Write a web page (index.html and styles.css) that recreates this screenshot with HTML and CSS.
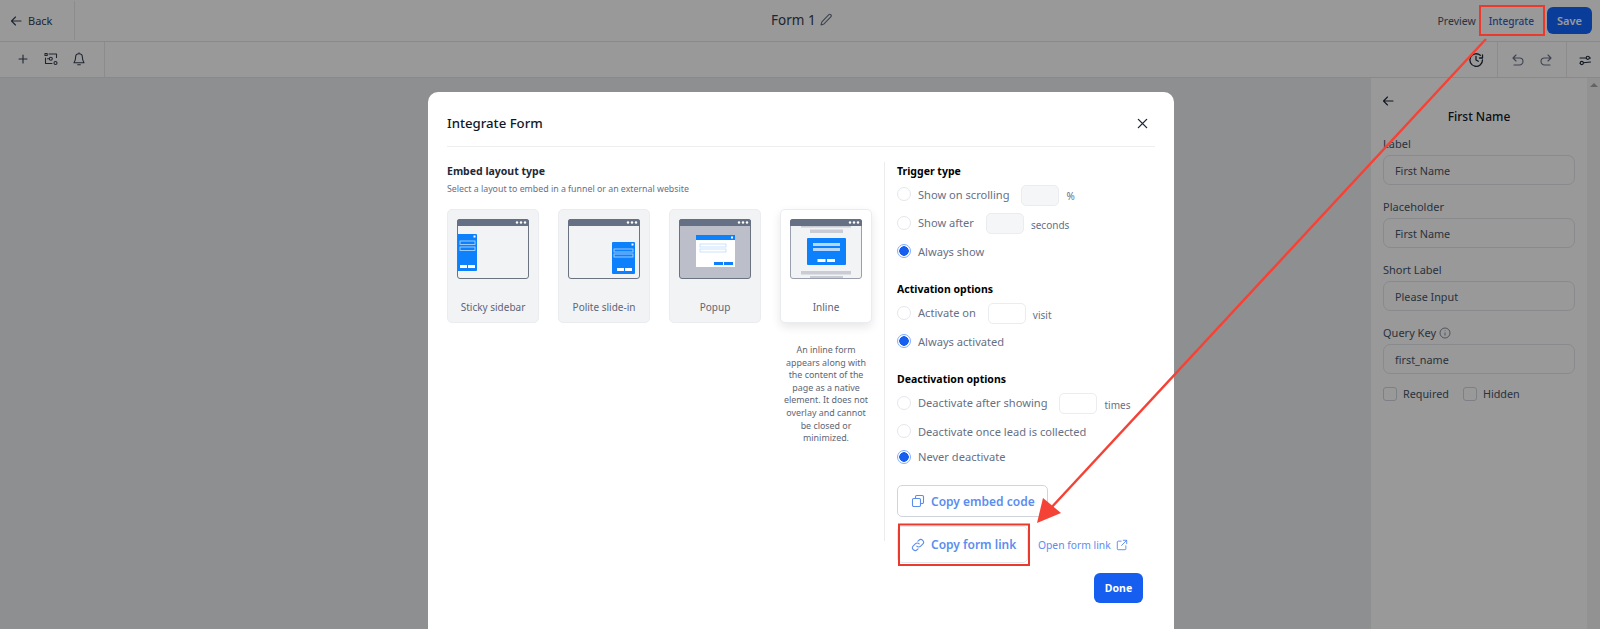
FILE: index.html
```html
<!DOCTYPE html>
<html lang="en">
<head>
<meta charset="utf-8">
<title>Integrate Form</title>
<link rel="stylesheet" href="styles.css">
</head>
<body>
<div class="app">
  <header class="topbar">
    <div class="back">
      <svg class="ic14" viewBox="0 0 14 14"><path d="M12 7H2.500M6.500 3l-4 4 4 4" /></svg>
      <span>Back</span>
    </div>
    <div class="title">
      <span>Form 1</span>
      <svg class="ic14" viewBox="0 0 14 14"><path d="M9.600 1.800a1.500 1.500 0 0 1 2.200 2.100L5 10.900l-3 1 .9-3.100z" /></svg>
    </div>
    <div class="actions">
      <span class="preview">Preview</span>
      <span class="integrate">Integrate</span>
      <span class="save">Save</span>
    </div>
  </header>
  <div class="toolbar">
    <div class="tools">
      <svg class="ic14" viewBox="0 0 14 14"><path d="M7 3v8M3 7h8" /></svg>
      <svg class="ic14" viewBox="0 0 14 14"><rect x="1" y="1.500" width="2.200" height="2" /><path d="M5 2h7.500v3.500M1.500 6v5.500H8" /><circle cx="6.800" cy="6.800" r="1.500" /><circle cx="11.500" cy="11" r="1.500" /><path d="M3.500 6.800h1.500" /></svg>
      <svg class="ic14" viewBox="0 0 14 14"><path d="M7 .8v1M7 1.800a3.400 3.400 0 0 0-3.400 3.400c0 3.300-1.600 5.600-1.600 5.600h10s-1.600-2.300-1.600-5.600A3.400 3.400 0 0 0 7 1.800ZM5.700 12.800h2.600" /></svg>
    </div>
    <div class="tools-right">
      <svg class="ic16 history" viewBox="0 0 16 16"><path d="M14.500 8A6.300 6.300 0 1 1 12.300 3.300M8 4.500V8l2.300 1.300M14.500 3v3h-3" /></svg>
      <div class="undo-group">
        <svg class="ic14 faint" viewBox="0 0 14 14"><path d="M5 2 2 5l3 3M2 5h6.500a3.500 3.500 0 0 1 0 7H3" /></svg>
        <svg class="ic14 faint" viewBox="0 0 14 14"><path d="M9 2l3 3-3 3M12 5H5.500a3.500 3.500 0 0 0 0 7H11" /></svg>
      </div>
      <div class="settings">
        <svg class="ic14" viewBox="0 0 14 14"><path d="M2 5h6M11.500 5H12.500M2 10.200h.5M5.500 9.800l7-.8" /><circle cx="9.800" cy="4.800" r="1.600" /><circle cx="3.800" cy="10" r="1.600" /></svg>
      </div>
    </div>
  </div>
  <div class="workspace">
    <div class="canvas"></div>
    <aside class="panel">
      <svg class="ic14 panel-back" viewBox="0 0 14 14"><path d="M12 7H2.500M6.500 3l-4 4 4 4" /></svg>
      <h2>First Name</h2>
      <label class="field-label">Label</label>
      <div class="field">First Name</div>
      <label class="field-label">Placeholder</label>
      <div class="field">First Name</div>
      <label class="field-label">Short Label</label>
      <div class="field">Please Input</div>
      <label class="field-label">Query Key
        <svg class="info" viewBox="0 0 12 12"><circle cx="6" cy="6" r="5" /><path d="M6 5.500v3M6 3.500v.6" /></svg>
      </label>
      <div class="field">first_name</div>
      <div class="checks">
        <span class="check"></span><span class="check-text">Required</span>
        <span class="check second"></span><span class="check-text">Hidden</span>
      </div>
    </aside>
    <div class="scrollcol"><span class="scroll-up"></span></div>
  </div>
</div>

<div class="overlay">
  <section class="modal">
    <div class="modal-head">
      <h1>Integrate Form</h1>
      <svg class="close" viewBox="0 0 12 12"><path d="M1.500 1.500l9 9M10.500 1.500l-9 9" /></svg>
    </div>
    <div class="modal-body">
      <div class="left">
        <h3>Embed layout type</h3>
        <p class="sub">Select a layout to embed in a funnel or an external website</p>
        <div class="cards">
          <div class="card-col">
            <div class="card">
              <svg class="illus" viewBox="0 0 72 60">
                <rect x=".5" y=".5" width="71" height="59" rx="2.500" fill="#f2f3f5" stroke="#6b7280"/>
                <path d="M0 7V2.500A2.500 2.500 0 0 1 2.500 0h67A2.500 2.500 0 0 1 72 2.500V7z" fill="#667085"/>
                <g fill="#fff"><circle cx="60" cy="3.500" r="1.200"/><circle cx="64" cy="3.500" r="1.200"/><circle cx="68" cy="3.500" r="1.200"/></g>
                <path d="M1 15h18a1 1 0 0 1 1 1v35a1 1 0 0 1-1 1H1z" fill="#0d80fb"/>
                <rect x="3" y="22" width="15" height="3.500" fill="none" stroke="#bcdcff" stroke-width=".8"/>
                <rect x="3" y="28" width="15" height="3.500" fill="none" stroke="#bcdcff" stroke-width=".8"/>
                <rect x="3" y="46" width="7" height="3" fill="#fff"/><rect x="11" y="46" width="7" height="3" fill="#fff"/>
                <rect x="16.500" y="16.500" width="2" height="2" fill="#fff"/>
              </svg>
              <span>Sticky sidebar</span>
            </div>
          </div>
          <div class="card-col">
            <div class="card">
              <svg class="illus" viewBox="0 0 72 60">
                <rect x=".5" y=".5" width="71" height="59" rx="2.500" fill="#f2f3f5" stroke="#6b7280"/>
                <path d="M0 7V2.500A2.500 2.500 0 0 1 2.500 0h67A2.500 2.500 0 0 1 72 2.500V7z" fill="#667085"/>
                <g fill="#fff"><circle cx="60" cy="3.500" r="1.200"/><circle cx="64" cy="3.500" r="1.200"/><circle cx="68" cy="3.500" r="1.200"/></g>
                <rect x="44" y="23" width="23" height="32" rx="1" fill="#0d80fb"/>
                <rect x="46" y="30" width="19" height="3" fill="none" stroke="#bcdcff" stroke-width=".8"/>
                <rect x="46" y="35" width="19" height="3" fill="none" stroke="#bcdcff" stroke-width=".8"/>
                <rect x="49" y="49" width="7" height="3" fill="#fff"/><rect x="57" y="49" width="7" height="3" fill="#fff"/>
                <rect x="63.500" y="24.500" width="2" height="2" fill="#fff"/>
              </svg>
              <span>Polite slide-in</span>
            </div>
          </div>
          <div class="card-col">
            <div class="card">
              <svg class="illus" viewBox="0 0 72 60">
                <rect x=".5" y=".5" width="71" height="59" rx="2.500" fill="#bcbfc9" stroke="#6b7280"/>
                <path d="M0 7V2.500A2.500 2.500 0 0 1 2.500 0h67A2.500 2.500 0 0 1 72 2.500V7z" fill="#667085"/>
                <g fill="#fff"><circle cx="60" cy="3.500" r="1.200"/><circle cx="64" cy="3.500" r="1.200"/><circle cx="68" cy="3.500" r="1.200"/></g>
                <rect x="17" y="16" width="39" height="32" fill="#fff"/>
                <rect x="17" y="16" width="39" height="5" fill="#0d80fb"/>
                <rect x="52" y="17.500" width="2" height="2" fill="#fff"/>
                <rect x="21" y="25" width="26" height="3" fill="#fff" stroke="#a9d0ff" stroke-width=".6"/>
                <rect x="21" y="30" width="26" height="3" fill="#fff" stroke="#a9d0ff" stroke-width=".6"/>
                <rect x="35" y="43" width="9" height="3" fill="#0d80fb"/><rect x="45" y="43" width="9" height="3" fill="#0d80fb"/>
              </svg>
              <span>Popup</span>
            </div>
          </div>
          <div class="card-col">
            <div class="card active">
              <svg class="illus" viewBox="0 0 72 60">
                <rect x=".5" y=".5" width="71" height="59" rx="2.500" fill="#f2f3f5" stroke="#9a9fae"/>
                <path d="M0 7V2.500A2.500 2.500 0 0 1 2.500 0h67A2.500 2.500 0 0 1 72 2.500V7z" fill="#667085"/>
                <g fill="#fff"><circle cx="60" cy="3.500" r="1.200"/><circle cx="64" cy="3.500" r="1.200"/><circle cx="68" cy="3.500" r="1.200"/></g>
                <rect x="11" y="7" width="50" height="1.500" fill="#c9ccd4"/>
                <rect x="20" y="10.500" width="33" height="3.500" fill="#c9ccd4"/>
                <rect x="17" y="19" width="39" height="27" rx="1" fill="#0d80fb"/>
                <rect x="23" y="24" width="27" height="3" fill="#b7d8fd"/>
                <rect x="23" y="29" width="27" height="3" fill="#b7d8fd"/>
                <rect x="27.500" y="40" width="8" height="3" fill="#fff"/><rect x="37" y="40" width="8" height="3" fill="#fff"/>
                <rect x="11" y="52" width="50" height="3.500" fill="#c9ccd4"/>
                <rect x="20" y="57" width="33" height="2" fill="#c9ccd4"/>
              </svg>
              <span>Inline</span>
            </div>
            <p class="desc">An inline form appears along with the content of the page as a native element. It does not overlay and cannot be closed or minimized.</p>
          </div>
        </div>
      </div>
      <div class="right">
        <div class="group first">
          <h3>Trigger type</h3>
          <div class="row"><span class="radio"></span><span class="txt">Show on scrolling</span><span class="num tinted"></span><span class="unit">%</span></div>
          <div class="row"><span class="radio"></span><span class="txt">Show after</span><span class="num tinted"></span><span class="unit">seconds</span></div>
          <div class="row"><span class="radio on"></span><span class="txt">Always show</span></div>
        </div>
        <div class="group">
          <h3>Activation options</h3>
          <div class="row"><span class="radio"></span><span class="txt">Activate on</span><span class="num"></span><span class="unit">visit</span></div>
          <div class="row"><span class="radio on"></span><span class="txt">Always activated</span></div>
        </div>
        <div class="group last">
          <h3>Deactivation options</h3>
          <div class="row"><span class="radio"></span><span class="txt">Deactivate after showing</span><span class="num"></span><span class="unit">times</span></div>
          <div class="row"><span class="radio"></span><span class="txt">Deactivate once lead is collected</span></div>
          <div class="row tight"><span class="radio on"></span><span class="txt">Never deactivate</span></div>
        </div>
        <div class="copy-btn embed">
          <svg class="ic14" viewBox="0 0 14 14"><rect x="1.500" y="4.500" width="8" height="8" rx="1.200"/><path d="M4.500 4.500V2.700a1.200 1.200 0 0 1 1.200-1.200h5.600a1.200 1.200 0 0 1 1.200 1.200v5.600a1.200 1.200 0 0 1-1.200 1.200H9.500"/></svg>
          <span>Copy embed code</span>
        </div>
        <div class="link-row">
          <div class="copy-btn link">
            <svg class="ic14" viewBox="0 0 14 14"><path d="M5.800 8.200a2.700 2.700 0 0 0 3.900 0l2-2a2.700 2.700 0 0 0-3.900-3.900l-.9.900M8.200 5.800a2.700 2.700 0 0 0-3.900 0l-2 2a2.700 2.700 0 0 0 3.900 3.900l.9-.9"/></svg>
            <span>Copy form link</span>
          </div>
          <span class="open-link">Open form link</span>
          <svg class="ic14 open-ic" viewBox="0 0 14 14"><path d="M11.500 8v3.500a1 1 0 0 1-1 1h-8a1 1 0 0 1-1-1v-8a1 1 0 0 1 1-1H6M8.500 1.500h4v4M12.500 1.500l-6 6"/></svg>
        </div>
        <div class="done-row"><span class="done">Done</span></div>
      </div>
    </div>
  </section>
</div>

<svg class="annotations" viewBox="0 0 1600 629">
  <rect class="box" x="1480" y="6" width="64" height="29"/>
  <rect class="box" x="899" y="524.500" width="130" height="40.500"/>
  <path class="arrow-line" d="M1486 39 1050 509"/>
  <path class="arrow-head" d="M1037 523 1043 498 1061 513z"/>
</svg>
</body>
</html>
```
FILE: styles.css
```css
* { box-sizing: border-box; }
html, body { margin: 0; height: 629px; overflow: hidden; }
body { font-family: "Noto Sans", "Open Sans", sans-serif; color: #344054; background: #fff; }
svg { display: block; flex: none; }
.ic14 { width: 14px; height: 14px; fill: none; stroke: currentColor; stroke-width: 1.1; stroke-linecap: round; stroke-linejoin: round; }
.ic16 { width: 16px; height: 16px; fill: none; stroke: currentColor; stroke-width: 1.3; stroke-linecap: round; stroke-linejoin: round; }

.app { height: 629px; display: flex; flex-direction: column; }

.topbar { height: 42px; flex: none; border-bottom: 1px solid #e4e4e4; display: flex; align-items: center; position: relative; }
.back { width: 75px; height: 39px; border-right: 1px solid #eaeaea; display: flex; align-items: center; gap: 5px; padding-left: 9px; font-size: 11px; color: #344054; }
.title { position: absolute; left: 771px; top: 10px; display: flex; align-items: center; gap: 3px; font-size: 13.500px; line-height: 20px; color: #344054; }
.title .ic14 { color: #667085; }
.actions { margin-left: auto; display: flex; align-items: center; font-size: 10.500px; padding-right: 8px; }
.preview { color: #475467; margin-right: 13px; }
.integrate { color: #3a5fc0; margin-right: 13px; font-weight: 500; font-size: 10.100px; }
.save { width: 45px; height: 27px; background: #1166ff; color: #fff; border-radius: 6px; display: flex; align-items: center; justify-content: center; font-weight: 600; font-size: 11px; }

.toolbar { height: 36px; flex: none; border-bottom: 1px solid #e4e4e4; display: flex; justify-content: space-between; }
.tools { width: 105px; border-right: 1px solid #eaeaea; display: flex; align-items: center; gap: 14px; padding: 0 0 1px 16px; color: #344054; }
.tools-right { display: flex; align-items: center; height: 100%; color: #1d2939; }
.history { margin-right: 13px; }
.undo-group { height: 100%; width: 70px; border-left: 1px solid #eaeaea; border-right: 1px solid #eaeaea; display: flex; align-items: center; justify-content: center; gap: 14px; color: #667085; }
.settings { width: 33px; display: flex; align-items: center; padding-left: 11px; color: #1d2939; }

.workspace { flex: 1; display: flex; min-height: 0; }
.canvas { flex: 1; background: #edeef2; }
.panel { width: 216px; flex: none; background: #fff; padding: 16px 12px 0; color: #475467; }
.panel-back { color: #1d2939; margin-left: -2px; }
.panel h2 { margin: 0 0 8px; text-align: center; font-size: 12px; line-height: 18px; font-weight: 500; color: #101828; }
.field-label { display: flex; align-items: center; gap: 3px; height: 18px; padding-top: 2px; font-size: 11px; line-height: 16px; color: #475467; margin-bottom: 3px; }
.field { height: 30px; border: 1px solid #e4e7ec; border-radius: 7px; padding: 1px 0 0 11px; font-size: 10.800px; line-height: 28px; color: #475467; margin-bottom: 12px; }
.info { width: 12px; height: 12px; fill: none; stroke: #667085; stroke-width: .8; }
.checks { display: flex; align-items: center; margin-top: 6px; font-size: 10.800px; color: #475467; }
.check { width: 14px; height: 14px; border: 1px solid #d0d5dd; border-radius: 3px; margin-right: 6px; }
.check.second { margin-left: 14px; }
.scrollcol { width: 13px; flex: none; background: #f3f3f3; padding-top: 5px; display: flex; justify-content: center; }
.scroll-up { width: 0; height: 0; border: 4px solid transparent; border-top: 0; border-bottom: 4px solid #a5a5a5; }

.overlay { position: fixed; inset: 0; background: rgba(0, 0, 0, .4); display: flex; justify-content: center; padding: 92px 0 0 2px; overflow: hidden; }
.modal { width: 746px; height: 700px; flex: none; background: #fff; border-radius: 10px; padding: 0 19px; }
.modal-head { height: 55px; border-bottom: 1px solid #eeeeee; display: flex; align-items: center; justify-content: space-between; padding-right: 7px; }
.modal-head h1 { margin: 0; font-size: 13.200px; line-height: 20px; font-weight: 500; color: #101828; position: relative; top: 4px; }
.close { width: 11px; height: 11px; fill: none; stroke: #1d2939; stroke-width: 1.500; stroke-linecap: round; position: relative; top: 4px; }
.modal-body { display: flex; margin-top: 15px; }

.left { width: 438px; height: 379px; border-right: 1px solid #eaecf0; padding-top: 1px; flex: none; }
h3 { margin: 0; font-size: 10.500px; line-height: 16px; font-weight: 700; color: #101828; }
.left h3 { color: #1d2939; }
.sub { margin: 2px 0 0; font-size: 8.800px; line-height: 16px; color: #667085; }
.cards { display: flex; gap: 19px; margin-top: 12px; }
.card-col { width: 92px; flex: none; }
.card { height: 114px; border: 1px solid #eaecf0; border-radius: 5px; background: #f2f3f5; padding: 9px; display: flex; flex-direction: column; align-items: center; color: #5d6676; font-size: 10px; }
.card span { margin-top: 20px; line-height: 16px; white-space: nowrap; }
.card.active { background: #fff; box-shadow: 0 4px 10px rgba(16, 24, 40, .1); }
.illus { width: 72px; height: 60px; }
.desc { margin: 21px 4px 0; text-align: center; font-size: 8.900px; line-height: 12.600px; color: #5d6676; }

.right { flex: 1; padding: 1px 0 0 12px; }
.group { margin-bottom: 15px; }
.group.last { margin-bottom: 14px; }
.group h3 { margin-bottom: 2px; font-size: 10.500px; color: #000; }
.group.first h3 { margin-bottom: 1px; }
.row { height: 28.500px; display: flex; align-items: center; font-size: 11.100px; color: #667085; }
.row.tight { margin-top: -3px; }
.radio { width: 14px; height: 14px; flex: none; border: 1px solid #e4e7ec; border-radius: 50%; margin-right: 7px; background: #fff; }
.radio.on { border-color: #84adff; background: radial-gradient(circle, #155eef 4.500px, #fff 5px); }
.num { width: 38px; height: 21px; border: 1px solid #eaecf0; border-radius: 5px; background: #fff; margin: 2px 0 0 12px; }
.num.tinted { background: #f5f6f8; }
.unit { margin-left: 7px; margin-top: 4px; font-size: 10px; }

.copy-btn { display: flex; align-items: center; gap: 6px; padding-left: 13px; font-size: 12px; font-weight: 600; color: #5b8def; border: 1px solid #d0d5dd; border-radius: 5px; height: 32px; width: 151px; background: #fff; }
.link-row { display: flex; align-items: center; margin-top: 9px; }
.copy-btn.link { width: 131px; height: 37px; border-color: #e4e7ec; }
.open-link { margin-left: 10px; font-size: 10.300px; color: #5b8def; }
.open-ic { width: 12px; height: 12px; color: #5b8def; margin-left: 5px; }
.done-row { display: flex; justify-content: flex-end; margin-top: 10px; padding-right: 12px; }
.done { width: 49px; height: 30px; background: #155eef; color: #fff; border-radius: 6px; font-size: 10.500px; font-weight: 700; display: flex; align-items: center; justify-content: center; }

.annotations { position: fixed; left: 0; top: 0; width: 1600px; height: 629px; pointer-events: none; }
.box { fill: none; stroke: #ea3a2e; stroke-width: 2; }
.arrow-line { fill: none; stroke: #f44336; stroke-width: 2.500; }
.arrow-head { fill: #f44336; }
```
